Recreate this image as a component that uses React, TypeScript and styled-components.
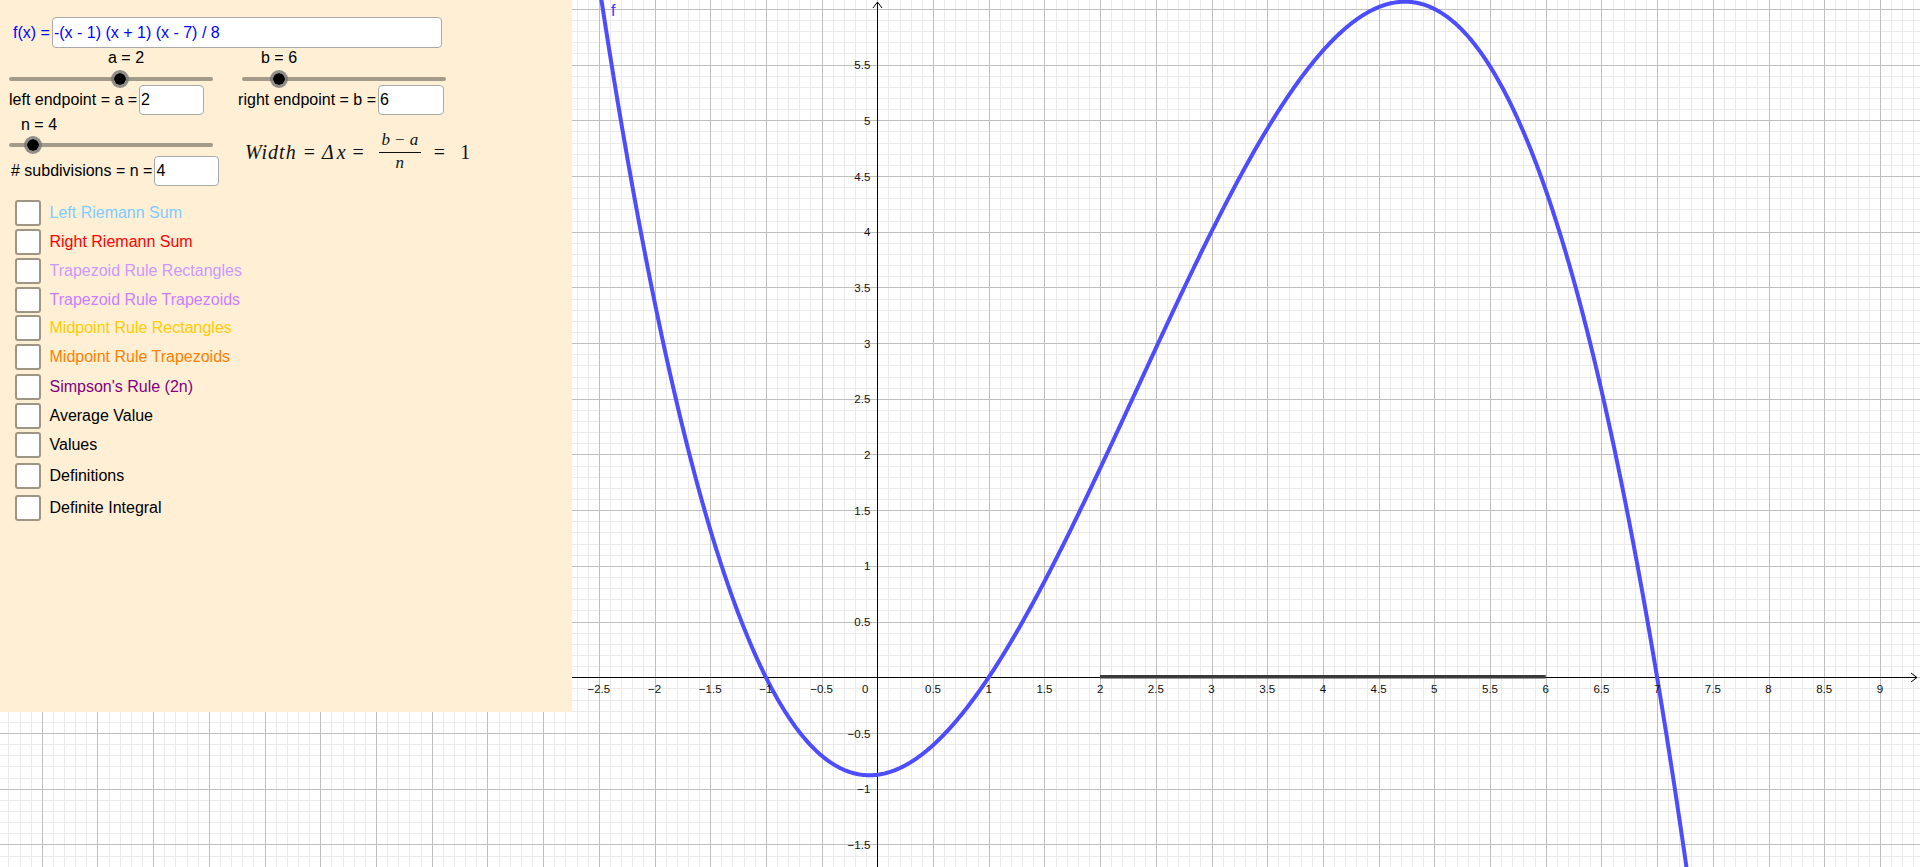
import React from 'react'
import styled, { createGlobalStyle } from 'styled-components'

const GlobalStyle = createGlobalStyle`
  html, body {
    margin: 0;
    padding: 0;
    overflow: hidden;
    background: #fff;
  }
  body {
    font-family: "Liberation Sans", Arial, sans-serif;
  }
`

// graph geometry (px per unit and origin on the page)
const W = 1920
const H = 867
const OX = 877.3
const OY = 677.3
const U = 111.4
const sx = (v: number) => OX + v * U
const sy = (v: number) => OY - v * U
const crisp = (p: number) => Math.round(p) + 0.5
const f = (x: number) => (-(x - 1) * (x + 1) * (x - 7)) / 8

const fmt = (v: number) => {
  const s = Number.isInteger(v) ? String(v) : v.toFixed(1)
  return s.replace('-', '\u2212')
}

const Stage = styled.div`
  position: relative;
  width: ${W}px;
  height: ${H}px;
  overflow: hidden;
  background: #fff;
`

const GraphSvg = styled.svg`
  display: block;
  text {
    font-family: "Liberation Sans", Arial, sans-serif;
    font-size: 11.5px;
    fill: #111;
  }
`

const Panel = styled.div`
  position: absolute;
  top: 0;
  left: 0;
  width: 572px;
  height: 712px;
  box-sizing: border-box;
  padding-top: 17px;
  background: #ffefd5;
  font-size: 16px;
  color: #000;
`

const FuncRow = styled.div`
  display: flex;
  align-items: center;
  gap: 2px;
  height: 31px;
  padding-left: 13px;
`

const FuncLabel = styled.span`
  color: #0000ff;
  white-space: nowrap;
`

const TextBox = styled.input<{ $w: number; $color?: string }>`
  width: ${p => p.$w}px;
  height: ${p => (p.$w > 100 ? 31 : 30)}px;
  box-sizing: border-box;
  padding: 0 0 0 1px;
  border: 1px solid #a9a9a9;
  border-radius: 4px;
  background: #fff;
  color: ${p => p.$color || '#000'};
  font-family: "Liberation Sans", Arial, sans-serif;
  font-size: 16px;
  outline: none;
`

const SliderPair = styled.div<{ $pad?: number }>`
  display: flex;
  gap: 29px;
  padding-left: ${p => (p.$pad === undefined ? 9 : p.$pad)}px;
  margin-top: 1px;
`

const SliderWrap = styled.div`
  width: 204px;
`

const SliderCaption = styled.div<{ $x: number }>`
  height: 18px;
  line-height: 18px;
  padding-left: ${p => p.$x}px;
  white-space: nowrap;
`

const SliderTrack = styled.div<{ $gap: number }>`
  position: relative;
  height: 10px;
  margin-top: ${p => p.$gap}px;
  &::before {
    content: '';
    position: absolute;
    left: 0;
    right: 0;
    top: 3px;
    height: 4px;
    border-radius: 2px;
    background: #a39a8a;
  }
`

const Knob = styled.div<{ $x: number }>`
  position: absolute;
  top: -4px;
  left: ${p => p.$x - 9}px;
  width: 18px;
  height: 18px;
  box-sizing: border-box;
  border-radius: 50%;
  border: 3px solid rgba(118, 118, 118, 0.8);
  background: #000;
  background-clip: padding-box;
`

const FieldRow = styled.div<{ $pad: number; $top?: number }>`
  display: flex;
  align-items: center;
  height: 31px;
  padding-left: ${p => p.$pad}px;
  margin-top: ${p => p.$top || 0}px;
`

const Field = styled.label<{ $left?: number }>`
  display: flex;
  align-items: center;
  gap: 2px;
  margin-left: ${p => p.$left || 0}px;
  white-space: nowrap;
`

const Lower = styled.div`
  display: flex;
  align-items: flex-start;
  padding-left: 9px;
`

const LeftCol = styled.div`
  width: 210px;
`

const Formula = styled.div`
  display: flex;
  align-items: center;
  margin-left: 26px;
  margin-top: 15.6px;
  font-family: "Liberation Serif", "Times New Roman", serif;
  font-size: 20px;
  color: #111;
`

const MathPart = styled.span<{ $ml?: number; $italic?: boolean; $ls?: number }>`
  margin-left: ${p => p.$ml || 0}px;
  margin-top: 1px;
  font-style: ${p => (p.$italic ? 'italic' : 'normal')};
  letter-spacing: ${p => p.$ls || 0}px;
  line-height: 20px;
  white-space: nowrap;
`

const Frac = styled.span<{ $ml: number }>`
  display: inline-flex;
  flex-direction: column;
  align-items: center;
  width: 42px;
  margin-left: ${p => p.$ml}px;
  font-size: 17px;
  font-style: italic;
`

const Numer = styled.span`
  line-height: 18px;
  padding-bottom: 3.7px;
  white-space: nowrap;
`

const FracBar = styled.span`
  align-self: stretch;
  height: 1px;
  background: #111;
`

const Denom = styled.span`
  line-height: 18px;
  padding-top: 0.6px;
`

const Minus = styled.span`
  font-style: normal;
  margin: 0 5px;
`

const CheckList = styled.div`
  margin-top: 14px;
  padding-left: 14.5px;
`

const CheckRow = styled.label<{ $top: number }>`
  display: flex;
  align-items: center;
  gap: 9px;
  height: 26px;
  margin-top: ${p => p.$top}px;
  cursor: pointer;
`

const Box = styled.span`
  width: 26px;
  height: 26px;
  box-sizing: border-box;
  border: 2px solid #9e9585;
  border-radius: 3px;
  background: #fff;
  flex-shrink: 0;
`

const CheckText = styled.span<{ $color: string }>`
  color: ${p => p.$color};
  white-space: nowrap;
`

const checks = [
  { text: 'Left Riemann Sum', color: '#80ccff', gap: 0 },
  { text: 'Right Riemann Sum', color: '#ff0000', gap: 3 },
  { text: 'Trapezoid Rule Rectangles', color: '#cc99ff', gap: 2.7 },
  { text: 'Trapezoid Rule Trapezoids', color: '#cc80ff', gap: 3 },
  { text: 'Midpoint Rule Rectangles', color: '#ffcc00', gap: 2.3 },
  { text: 'Midpoint Rule Trapezoids', color: '#ff8000', gap: 3 },
  { text: "Simpson's Rule (2n)", color: '#800080', gap: 4 },
  { text: 'Average Value', color: '#000', gap: 3.4 },
  { text: 'Values', color: '#000', gap: 2.6 },
  { text: 'Definitions', color: '#000', gap: 4.7 },
  { text: 'Definite Integral', color: '#000', gap: 6.3 },
]

const Slider = ({ label, labelX, knobX, gap }: { label: string; labelX: number; knobX: number; gap: number }) => (
  <SliderWrap>
    <SliderCaption $x={labelX}>{label}</SliderCaption>
    <SliderTrack $gap={gap}>
      <Knob $x={knobX} />
    </SliderTrack>
  </SliderWrap>
)

const Graph = () => {
  const minor: React.ReactNode[] = []
  const major: React.ReactNode[] = []
  for (let k = Math.ceil((-OX / U) * 10); k <= Math.floor(((W - OX) / U) * 10); k++) {
    const x = crisp(sx(k / 10))
    const el = <line key={'v' + k} x1={x} x2={x} y1={0} y2={H} />
    if (k % 5 === 0) major.push(el)
    else minor.push(el)
  }
  for (let k = Math.ceil((-(H - OY) / U) * 10); k <= Math.floor((OY / U) * 10); k++) {
    const y = crisp(sy(k / 10))
    const el = <line key={'h' + k} x1={0} x2={W} y1={y} y2={y} />
    if (k % 5 === 0) major.push(el)
    else minor.push(el)
  }

  const xLabels: React.ReactNode[] = []
  for (let k = -15; k <= 18; k++) {
    if (k === 0) continue
    const v = k / 2
    xLabels.push(
      <text key={'xl' + k} x={sx(v)} y={OY + 16} textAnchor="middle">
        {fmt(v)}
      </text>
    )
  }
  const yLabels: React.ReactNode[] = []
  for (let k = -3; k <= 11; k++) {
    if (k === 0) continue
    const v = k / 2
    yLabels.push(
      <text key={'yl' + k} x={OX - 7} y={sy(v) + 4.5} textAnchor="end">
        {fmt(v)}
      </text>
    )
  }

  const pts: string[] = []
  for (let x = -2.8; x <= 7.5; x += 0.01) {
    pts.push(`${sx(x).toFixed(2)},${sy(f(x)).toFixed(2)}`)
  }

  const ax = crisp(OX)
  const ay = crisp(OY)

  return (
    <GraphSvg width={W} height={H} viewBox={`0 0 ${W} ${H}`}>
      <g stroke="#ebebeb" strokeWidth={1}>{minor}</g>
      <g stroke="#bfbfbf" strokeWidth={1}>{major}</g>
      <g stroke="#000" strokeWidth={1} fill="none">
        <line x1={0} x2={W - 3} y1={ay} y2={ay} />
        <line x1={ax} x2={ax} y1={H} y2={2} />
        <polyline points={`${W - 9},${ay - 4.5} ${W - 3},${ay} ${W - 9},${ay + 4.5}`} />
        <polyline points={`${ax - 4.5},${8} ${ax},${2} ${ax + 4.5},${8}`} />
      </g>
      <line x1={sx(2)} x2={sx(6)} y1={OY - 0.5} y2={OY - 0.5} stroke="#3a3a3a" strokeWidth={3.5} />
      <polyline points={pts.join(' ')} fill="none" stroke="#4d4dff" strokeWidth={4} strokeLinejoin="round" />
      {xLabels}
      {yLabels}
      <text x={OX - 9} y={OY + 16} textAnchor="end">0</text>
      <text x={611} y={16} style={{ fontSize: 16, fill: '#3a3aff' }}>f</text>
    </GraphSvg>
  )
}

export default function App() {
  return (
    <Stage>
      <GlobalStyle />
      <Graph />
      <Panel>
        <FuncRow>
          <FuncLabel>f(x) =</FuncLabel>
          <TextBox $w={390} $color="#0000ff" readOnly value="-(x - 1) (x + 1) (x - 7) / 8" />
        </FuncRow>

        <SliderPair>
          <Slider label="a = 2" labelX={99} knobX={111} gap={7} />
          <Slider label="b = 6" labelX={19} knobX={37} gap={7} />
        </SliderPair>

        <FieldRow $pad={9}>
          <Field>
            left endpoint = a =
            <TextBox $w={65} readOnly value="2" />
          </Field>
          <Field $left={34}>
            right endpoint = b =
            <TextBox $w={66} readOnly value="6" />
          </Field>
        </FieldRow>

        <Lower>
          <LeftCol>
            <SliderPair $pad={0}>
              <Slider label="n = 4" labelX={12} knobX={24} gap={6} />
            </SliderPair>
            <FieldRow $pad={2} $top={5}>
              <Field>
                # subdivisions = n =
                <TextBox $w={65} readOnly value="4" />
              </Field>
            </FieldRow>
          </LeftCol>
          <Formula>
            <MathPart $italic $ls={1}>Width</MathPart>
            <MathPart $ml={7}>=</MathPart>
            <MathPart $ml={7} $italic $ls={3}>Δx</MathPart>
            <MathPart $ml={4}>=</MathPart>
            <Frac $ml={15}>
              <Numer>
                b<Minus>−</Minus>a
              </Numer>
              <FracBar />
              <Denom>n</Denom>
            </Frac>
            <MathPart $ml={13}>=</MathPart>
            <MathPart $ml={15}>1</MathPart>
          </Formula>
        </Lower>

        <CheckList>
          {checks.map(c => (
            <CheckRow key={c.text} $top={c.gap}>
              <Box />
              <CheckText $color={c.color}>{c.text}</CheckText>
            </CheckRow>
          ))}
        </CheckList>
      </Panel>
    </Stage>
  )
}
